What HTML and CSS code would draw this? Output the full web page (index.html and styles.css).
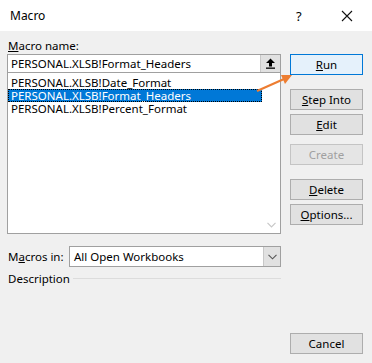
FILE: index.html
```html
<!DOCTYPE html>
<html>
<head>
<meta charset="utf-8">
<link rel="stylesheet" href="styles.css">
</head>
<body>
<div class="dialog">
  <div class="titlebar">
    <span class="title">Macro</span>
    <span class="help">?</span>
    <span class="close">
      <svg width="12" height="12" viewBox="0 0 12 12"><path d="M1 1 L11 11 M11 1 L1 11" stroke="#111" stroke-width="1.1" fill="none"/></svg>
    </span>
  </div>
  <div class="body">
    <div class="main">
      <div class="left">
        <div class="label"><u>M</u>acro name:</div>
        <div class="namebox">
          <span class="nametext">PERSONAL.XLSB!Format_Headers</span>
          <span class="upbtn">
            <svg width="11" height="11" viewBox="0 0 11 11"><path d="M5.5 0.5 L10 5 L7 5 L7 8.5 L4 8.5 L4 5 L1 5 Z" fill="#000"/><rect x="1" y="9.5" width="9" height="1.3" fill="#000"/></svg>
          </span>
        </div>
        <div class="list">
          <div class="items">
            <div class="item">PERSONAL.XLSB!Date_Format</div>
            <div class="item sel">PERSONAL.XLSB!Format_Headers</div>
            <div class="item">PERSONAL.XLSB!Percent_Format</div>
          </div>
          <div class="scroll">
            <svg width="9" height="6" viewBox="0 0 9 6"><path d="M0.5 0.8 L4.5 4.8 L8.5 0.8" stroke="#c8c8c8" stroke-width="1.2" fill="none"/></svg>
          </div>
        </div>
      </div>
      <div class="right">
        <div class="btn default"><u>R</u>un</div>
        <div class="btn g1"><u>S</u>tep Into</div>
        <div class="btn g2"><u>E</u>dit</div>
        <div class="btn g3 disabled">Create</div>
        <div class="btn g1"><u>D</u>elete</div>
        <div class="btn g2"><u>O</u>ptions...</div>
      </div>
    </div>
    <div class="macrosin">
      <span class="label2">M<u>a</u>cros in:</span>
      <div class="combo">
        <span class="combotext">All Open Workbooks</span>
        <span class="dropbtn">
          <svg width="9" height="6" viewBox="0 0 9 6"><path d="M0.5 0.8 L4.5 4.8 L8.5 0.8" stroke="#555" stroke-width="1.1" fill="none"/></svg>
        </span>
      </div>
    </div>
    <div class="desc">
      <span>Description</span>
      <span class="rule"></span>
    </div>
    <div class="footer">
      <div class="btn">Cancel</div>
    </div>
  </div>
  <svg class="arrow" width="50" height="40" viewBox="0 0 50 40">
    <path d="M3 24 L30 12" stroke="#ed7d31" stroke-width="2.2" fill="none"/>
    <path d="M38 8 L27 8 L31 17 Z" fill="#ed7d31"/>
  </svg>
</div>
</body>
</html>
```

FILE: styles.css
```css
* { box-sizing: border-box; }
html, body { margin: 0; padding: 0; }
body {
  width: 372px;
  height: 363px;
  overflow: hidden;
  font-family: "Noto Sans", "Open Sans", sans-serif;
  font-size: 11.5px;
  color: #000;
  background: #f0f0f0;
}
u { text-decoration: underline; text-underline-offset: 1px; }
.dialog { position: relative; width: 372px; height: 363px; }
.titlebar {
  height: 31px;
  background: #fff;
  display: flex;
  align-items: center;
  padding-left: 10px;
}
.title { flex: 1; font-size: 12px; }
.help { width: 14px; margin-right: 31px; font-size: 13px; }
.close { width: 12px; margin-right: 19px; display: flex; align-items: center; }
.body { padding: 8px 9px 0 7px; }
.main { display: flex; gap: 9px; }
.left { width: 274px; }
.label { height: 15px; line-height: 13px; padding-left: 1px; }
.namebox {
  height: 19px;
  background: #fff;
  border: 1px solid #a0a0a0;
  display: flex;
  align-items: center;
}
.nametext { flex: 1; padding-left: 3px; line-height: 17px; }
.upbtn {
  width: 20px;
  height: 17px;
  background: #e1e1e1;
  border-left: 1px solid #c8c8c8;
  display: flex;
  align-items: center;
  justify-content: center;
}
.list {
  height: 161px;
  background: #fff;
  border: 1px solid #a0a0a0;
  border-top: none;
  display: flex;
}
.items { flex: 1; padding-top: 3px; }
.item { height: 13px; line-height: 13px; padding-left: 3px; white-space: nowrap; }
.item.sel { background: #0078d7; color: #fff; outline: 1px dotted #000; outline-offset: -1px; }
.scroll {
  width: 18px;
  display: flex;
  align-items: flex-end;
  justify-content: center;
  padding-bottom: 5px;
}
.right { width: 73px; padding-top: 15px; display: flex; flex-direction: column; }
.btn {
  height: 21px;
  width: 73px;
  background: #e1e1e1;
  border: 1px solid #adadad;
  display: flex;
  align-items: center;
  justify-content: center;
  line-height: 14px;
}
.btn.default { background: #e5f1fb; border-color: #0078d7; }
.btn.g1 { margin-top: 14px; }
.btn.g2 { margin-top: 4px; }
.btn.g3 { margin-top: 9px; }
.btn.disabled { color: #a0a0a0; background: #e5e5e5; border-color: #c4c4c4; }
.macrosin { display: flex; align-items: center; margin-top: 12px; height: 21px; }
.label2 { width: 62px; padding-left: 1px; }
.combo {
  width: 212px;
  height: 21px;
  background: #fff;
  border: 1px solid #a0a0a0;
  display: flex;
  align-items: center;
}
.combotext { flex: 1; padding-left: 4px; }
.dropbtn {
  width: 17px;
  height: 19px;
  background: #e1e1e1;
  border-left: 1px solid #c8c8c8;
  display: flex;
  align-items: center;
  justify-content: center;
}
.desc { display: flex; align-items: center; width: 274px; height: 14px; margin-top: 4px; padding-left: 1px; }
.rule { flex: 0 0 208px; margin-left: auto; height: 1px; background: #dcdcdc; }
.footer { display: flex; justify-content: flex-end; margin-top: 48px; }
.arrow { position: absolute; left: 254px; top: 67px; }
```
